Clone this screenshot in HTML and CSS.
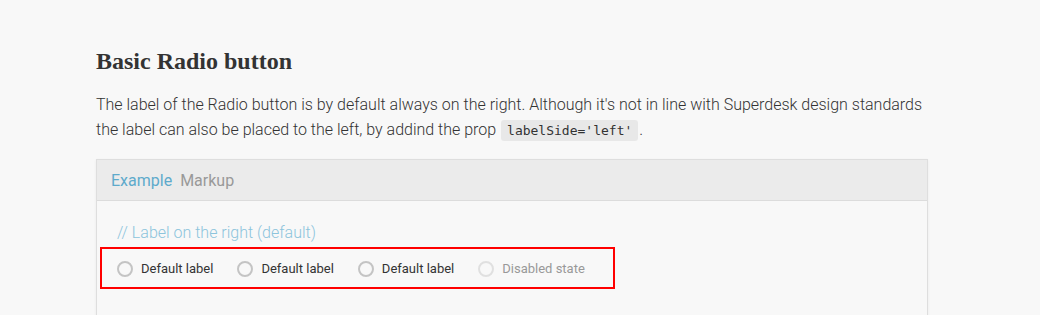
FILE: index.html
```html
<!DOCTYPE html>
<html lang="en">
<head>
  <meta charset="UTF-8">
  <title>Radio button</title>
  <link rel="stylesheet" href="styles.css">
</head>
<body>
  <div class="docs">
    <h3 class="docs-title">Basic Radio button</h3>
    <p class="docs-text">The label of the Radio button is by default always on the right. Although it's not in line with Superdesk design standards the label can also be placed to the left, by addind the prop <code>labelSide='left'</code>.</p>

    <div class="example">
      <div class="example-tabs">
        <span class="tab active">Example</span>
        <span class="tab">Markup</span>
      </div>
      <div class="example-body">
        <p class="comment">// Label on the right (default)</p>
        <div class="radio-group">
          <label class="radio"><span class="radio-circle"></span>Default label</label>
          <label class="radio"><span class="radio-circle"></span>Default label</label>
          <label class="radio"><span class="radio-circle"></span>Default label</label>
          <label class="radio disabled"><span class="radio-circle"></span>Disabled state</label>
        </div>
      </div>
    </div>
  </div>
</body>
</html>
```

FILE: styles.css
```css
body {
  margin: 0;
  background: #f8f8f8;
  font-family: Roboto, sans-serif;
  color: #333;
}
.docs {
  width: 832px;
  margin-left: 96px;
  padding-top: 48px;
}
.docs-title {
  font-family: 'Liberation Serif', serif;
  font-size: 24px;
  font-weight: bold;
  margin: 0 0 17px;
  color: #333;
}
.docs-text {
  font-size: 16px;
  font-weight: 300;
  line-height: 25px;
  margin: 0 0 16px;
  color: #333;
}
.docs-text code {
  font-family: 'DejaVu Sans Mono', monospace;
  font-size: 13px;
  background: #e8e8e8;
  padding: 3px 6px;
  margin: 0 1px;
  border-radius: 3px;
}
.example {
  border: 1px solid #dedede;
  box-shadow: 0 1px 3px rgba(0, 0, 0, 0.06);
  height: 200px;
}
.example-tabs {
  background: #ebebeb;
  border-bottom: 1px solid #dcdcdc;
  height: 40px;
  display: flex;
  align-items: center;
  gap: 8px;
  padding: 0 14px;
}
.tab {
  font-size: 16px;
  color: #999;
}
.tab.active {
  color: #5eaacb;
}
.example-body {
  padding: 22px 3px 0;
}
.comment {
  margin: 0 0 5px 17px;
  font-size: 16px;
  font-weight: 300;
  color: #8cc4dc;
}
.radio-group {
  display: inline-flex;
  align-items: center;
  gap: 24px;
  width: 481px;
  height: 37px;
  padding: 1px 15px 0;
  border: 2px solid #f00;
}
.radio {
  display: flex;
  align-items: center;
  gap: 8px;
  font-size: 13px;
  color: #333;
}
.radio-circle {
  width: 12px;
  height: 12px;
  border: 2px solid #c4c4c4;
  border-radius: 50%;
}
.radio.disabled {
  color: #999;
}
.radio.disabled .radio-circle {
  border-color: #e0e0e0;
}
```
